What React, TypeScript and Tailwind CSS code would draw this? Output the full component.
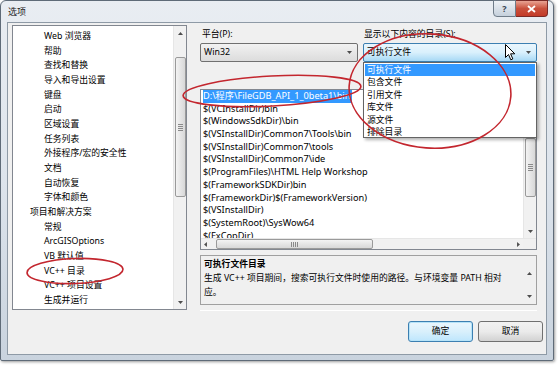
import React from 'react';

const treeItems: { label: string; level: number }[] = [
  { label: 'Web 浏览器', level: 1 },
  { label: '帮助', level: 1 },
  { label: '查找和替换', level: 1 },
  { label: '导入和导出设置', level: 1 },
  { label: '键盘', level: 1 },
  { label: '启动', level: 1 },
  { label: '区域设置', level: 1 },
  { label: '任务列表', level: 1 },
  { label: '外接程序/宏的安全性', level: 1 },
  { label: '文档', level: 1 },
  { label: '自动恢复', level: 1 },
  { label: '字体和颜色', level: 1 },
  { label: '项目和解决方案', level: 0 },
  { label: '常规', level: 1 },
  { label: 'ArcGISOptions', level: 1 },
  { label: 'VB 默认值', level: 1 },
  { label: 'VC++ 目录', level: 1 },
  { label: 'VC++ 项目设置', level: 1 },
  { label: '生成并运行', level: 1 },
];

const dirs = [
  '$(VCInstallDir)bin',
  '$(WindowsSdkDir)\\bin',
  '$(VSInstallDir)Common7\\Tools\\bin',
  '$(VSInstallDir)Common7\\tools',
  '$(VSInstallDir)Common7\\ide',
  '$(ProgramFiles)\\HTML Help Workshop',
  '$(FrameworkSDKDir)bin',
  '$(FrameworkDir)$(FrameworkVersion)',
  '$(VSInstallDir)',
  '$(SystemRoot)\\SysWow64',
  '$(FxCopDir)',
];

const kinds = ['可执行文件', '包含文件', '引用文件', '库文件', '源文件', '排除目录'];

const Arrow = ({ dir }: { dir: 'up' | 'down' | 'left' | 'right' }) => {
  const pts = {
    up: '0,4 3.5,0 7,4',
    down: '0,0 3.5,4 7,0',
    left: '4,0 0,3.5 4,7',
    right: '0,0 4,3.5 0,7',
  }[dir];
  const vertical = dir === 'up' || dir === 'down';
  return (
    <svg width={vertical ? 5 : 3} height={vertical ? 3 : 5} viewBox={vertical ? '0 0 7 4' : '0 0 4 7'}>
      <polygon points={pts} fill="#4d4d4d" />
    </svg>
  );
};

const Grip = ({ vertical }: { vertical: boolean }) => (
  <div className={vertical ? 'flex flex-col gap-[1px]' : 'flex gap-[1px]'}>
    {[0, 1, 2, 3].map((i) => (
      <div key={i} className={vertical ? 'w-[5px] h-[1px] bg-[#8a8a8a]' : 'w-[1px] h-[5px] bg-[#8a8a8a]'} />
    ))}
  </div>
);

const VScroll = ({ thumbTop, thumbHeight }: { thumbTop: number; thumbHeight: number }) => (
  <div className="w-[13px] h-full bg-[#f1f1f1] border-l border-[#e6e6e6] flex flex-col justify-between items-center relative">
    <div className="h-[14px] flex items-center justify-center"><Arrow dir="up" /></div>
    <div
      className="absolute left-[1px] w-[11px] rounded-[2px] border border-[#9a9a9a] bg-gradient-to-r from-[#f3f3f3] to-[#d8d8d8] flex items-center justify-center"
      style={{ top: thumbTop, height: thumbHeight }}
    >
      <Grip vertical />
    </div>
    <div className="h-[14px] flex items-center justify-center"><Arrow dir="down" /></div>
  </div>
);

export default function App() {
  return (
    <div className="relative w-[558px] h-[365px] bg-white text-[#000] font-[family-name:'Noto_Sans','Noto_Sans_CJK_SC',sans-serif] text-[8.8px]">
      {/* window frame */}
      <div className="w-[554px] h-[361px] rounded-t-[6px] rounded-b-[2px] border border-[#5f6b78] bg-gradient-to-b from-[#e9edf2] via-[#dde4ec] to-[#c9d3de] flex flex-col shadow-[1px_1px_3px_rgba(0,0,0,0.4)]">
        {/* title bar */}
        <div className="h-[21px] flex justify-between pl-[7px] pr-[5px]">
          <div className="pt-[4px] text-[9px] text-[#222]">选项</div>
          <div className="flex h-[17px] -mt-[1px]">
            <div className="w-[23px] h-full rounded-bl-[4px] border border-[#6f7c89] bg-gradient-to-b from-[#eef2f6] to-[#c5d0dc] flex items-center justify-center text-[9px] font-bold text-[#3a4654]">?</div>
            <div className="w-[32px] h-full rounded-br-[4px] border border-l-0 border-[#7a2a26] bg-gradient-to-b from-[#e8a293] via-[#c9503c] to-[#c33a28] flex items-center justify-center">
              <svg width="9" height="8" viewBox="0 0 9 8">
                <path d="M1 1 L8 7 M8 1 L1 7" stroke="#fff" strokeWidth="1.8" />
              </svg>
            </div>
          </div>
        </div>
        {/* client area */}
        <div className="mx-[6px] mb-[5px] flex-1 bg-[#f0f0f0] border border-[#8e9aa6] flex flex-col">
          <div className="flex pl-[4px] pt-[2px]">
            {/* tree */}
            <div className="w-[175px] h-[285px] bg-white border border-[#828790] flex">
              <div className="flex-1 pt-[3px] overflow-hidden">
                {treeItems.map((t) => (
                  <div
                    key={t.label}
                    className={`h-[14.67px] leading-[14.67px] whitespace-nowrap ${t.level === 0 ? 'pl-[17px]' : 'pl-[31px]'}`}
                  >
                    {t.label}
                  </div>
                ))}
              </div>
              <VScroll thumbTop={31} thumbHeight={140} />
            </div>
            {/* right panel */}
            <div className="ml-[13px] w-[337px] flex flex-col">
              <div className="flex gap-[5px] pt-[3px]">
                <div className="w-[158px]">
                  <div className="h-[15px] pl-[2px] leading-[12px]">平台(P):</div>
                  <div className="h-[19px] rounded-[2px] border border-[#707070] bg-gradient-to-b from-[#f2f2f2] to-[#dcdcdc] flex items-center justify-between pl-[3px] pr-[5px]">
                    <span>Win32</span>
                    <Arrow dir="down" />
                  </div>
                </div>
                <div className="w-[174px]">
                  <div className="h-[15px] pl-[1px] leading-[12px]">显示以下内容的目录(S):</div>
                  <div className="h-[19px] rounded-[2px] border border-[#3c7fb1] bg-gradient-to-b from-[#eaf6fd] via-[#d9f0fc] to-[#a7d9f5] flex items-center justify-between pl-[3px] pr-[5px]">
                    <span>可执行文件</span>
                    <Arrow dir="down" />
                  </div>
                </div>
              </div>
              {/* directory list */}
              <div className="mt-[27px] h-[161px] bg-white border border-[#828790] flex flex-col">
                <div className="flex flex-1 min-h-0">
                  <div className="flex-1 overflow-hidden pl-[2px] text-[9.2px]">
                    <div className="h-[12.7px] leading-[12.7px]">
                      <span className="inline-block bg-[#3399ff] text-white pr-[2px] whitespace-nowrap">D:\程序\FileGDB_API_1_0beta1\bin</span>
                    </div>
                    {dirs.map((d) => (
                      <div key={d} className="h-[12.7px] leading-[12.7px] whitespace-nowrap">{d}</div>
                    ))}
                  </div>
                  <VScroll thumbTop={48} thumbHeight={59} />
                </div>
                <div className="h-[11px] flex bg-[#f1f1f1] border-t border-[#e6e6e6]">
                  <div className="flex-1 flex items-center justify-between px-[3px] relative">
                    <Arrow dir="left" />
                    <div className="absolute left-[15px] top-[0px] w-[157px] h-[10px] rounded-[2px] border border-[#9a9a9a] bg-gradient-to-b from-[#f3f3f3] to-[#d8d8d8] flex items-center justify-center">
                      <Grip vertical={false} />
                    </div>
                    <Arrow dir="right" />
                  </div>
                  <div className="w-[13px] bg-[#f0f0f0]" />
                </div>
              </div>
              {/* description */}
              <div className="mt-[5px] h-[50px] border border-[#a0a0a0] bg-[#f0f0f0] flex justify-between">
                <div className="w-[312px] pl-[3px] pt-[1px] leading-[14px]">
                  <div className="font-bold">可执行文件目录</div>
                  <div>生成 VC++ 项目期间，搜索可执行文件时使用的路径。与环境变量 PATH 相对应。</div>
                </div>
                <div className="w-[13px] flex flex-col justify-between items-center pt-[16px] pb-[6px]">
                  <Arrow dir="up" />
                  <Arrow dir="down" />
                </div>
              </div>
              <div className="mt-[5px] h-[1px] bg-[#d5d5d5] border-b border-white" />
            </div>
          </div>
          {/* buttons */}
          <div className="flex justify-end gap-[5px] pr-[3px] mt-[10px]">
            <div className="w-[65px] h-[21px] rounded-[3px] border border-[#3c7fb1] bg-gradient-to-b from-[#eaf6fd] via-[#d9f0fc] to-[#bee6fd] shadow-[inset_0_0_0_1px_#b6e3f8] flex items-center justify-center">确定</div>
            <div className="w-[65px] h-[21px] rounded-[3px] border border-[#707070] bg-gradient-to-b from-[#f2f2f2] via-[#ebebeb] to-[#d2d2d2] flex items-center justify-center">取消</div>
          </div>
        </div>
      </div>

      {/* open dropdown list */}
      <div className="absolute left-[363px] top-[62px] w-[174px] h-[76px] bg-white border border-[#646464] shadow-[2px_2px_3px_rgba(0,0,0,0.3)] pt-[1px] px-[1px]">
        {kinds.map((k, i) => (
          <div
            key={k}
            className={`h-[12.4px] leading-[12.4px] pl-[2px] ${i === 0 ? 'bg-[#3399ff] text-white' : ''}`}
          >
            {k}
          </div>
        ))}
      </div>

      {/* cursor */}
      <svg className="absolute left-[505px] top-[44px]" width="11" height="17" viewBox="0 0 11 17">
        <path d="M0.5 0.5 L0.5 13.5 L3.5 10.5 L5.8 15.8 L7.8 14.9 L5.6 9.8 L9.8 9.8 Z" fill="#fff" stroke="#000" strokeWidth="1" strokeLinejoin="round" />
      </svg>

      {/* red annotations */}
      <svg className="absolute left-0 top-0 pointer-events-none" width="558" height="365" viewBox="0 0 558 365">
        <ellipse cx="272" cy="91" rx="89" ry="15" transform="rotate(-3 272 91)" fill="none" stroke="#c3262e" strokeWidth="1.6" />
        <ellipse cx="430" cy="91" rx="81" ry="57" transform="rotate(4 430 91)" fill="none" stroke="#c3262e" strokeWidth="1.6" />
        <ellipse cx="75" cy="271" rx="48" ry="12.5" transform="rotate(-2 75 271)" fill="none" stroke="#c3262e" strokeWidth="1.6" />
      </svg>
    </div>
  );
}
